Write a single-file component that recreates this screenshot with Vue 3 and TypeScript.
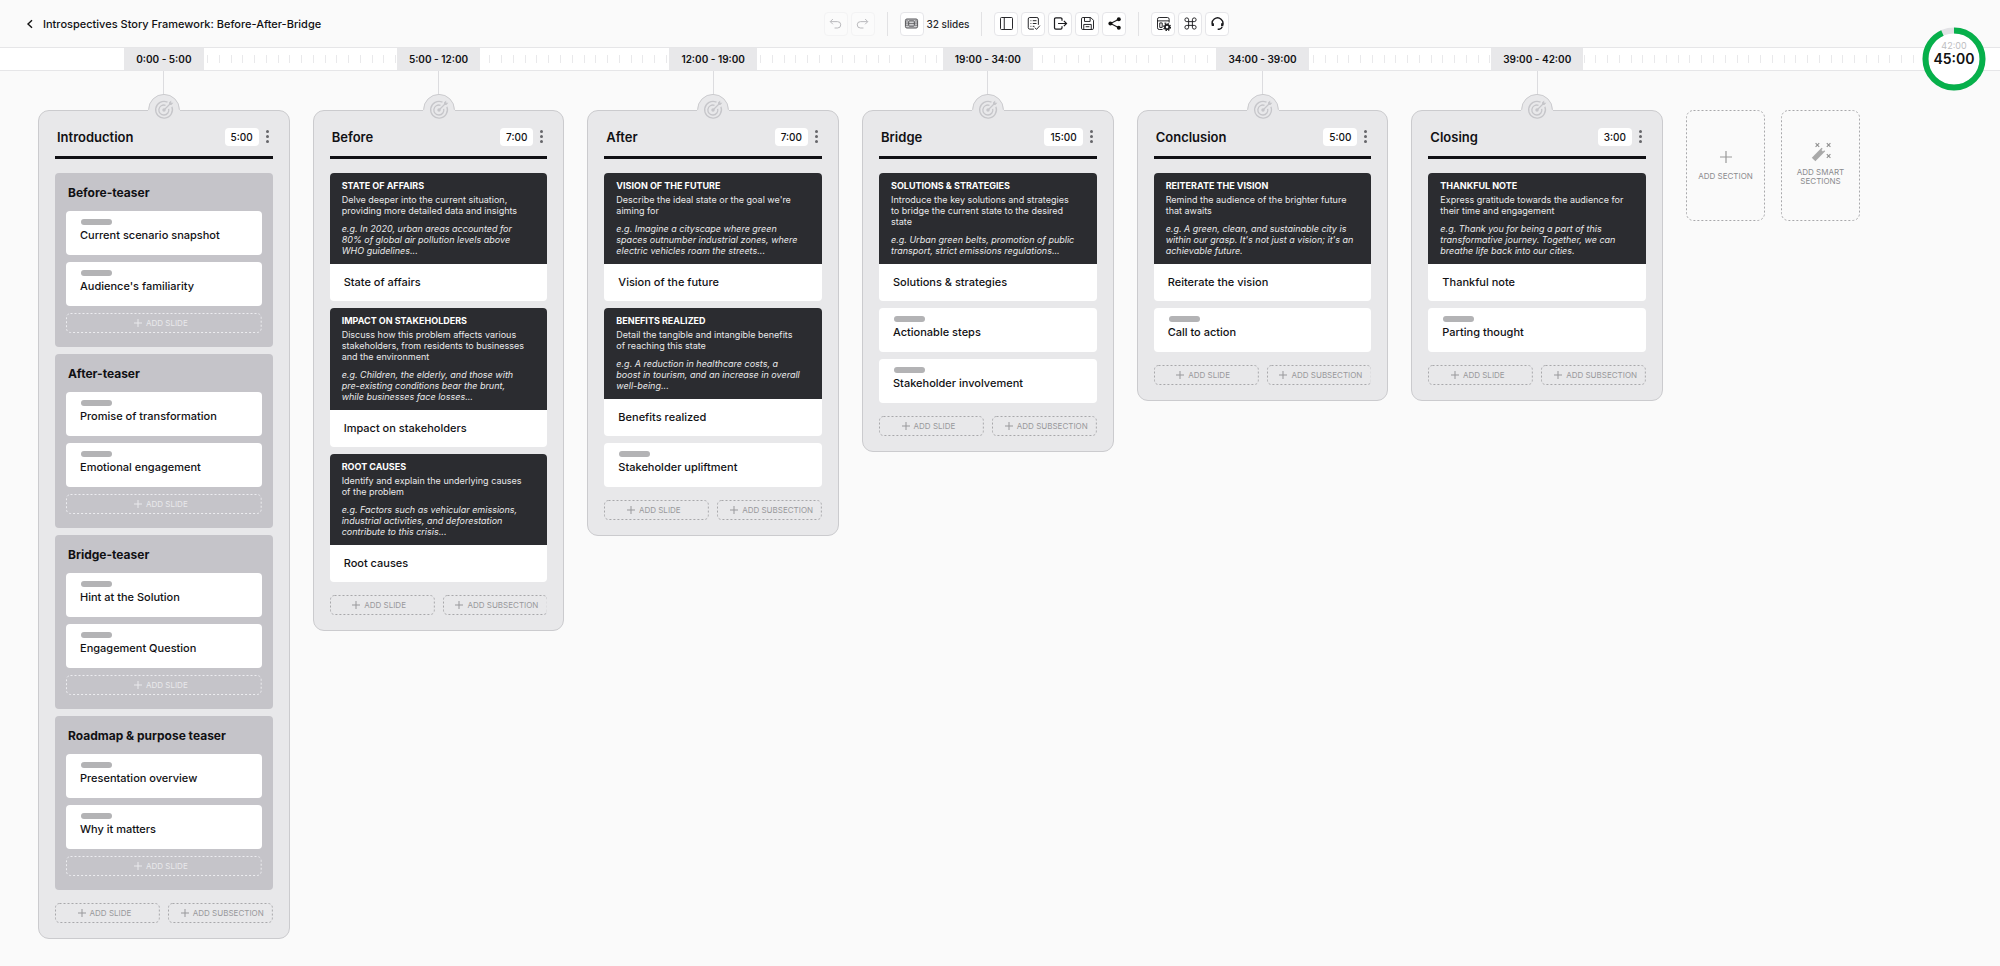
<script setup lang="ts">
interface Slide {
  title: string
  hint?: { head: string; text: string; example: string }
}
interface Subsection {
  title: string
  slides: Slide[]
}
interface Section {
  title: string
  range: string
  duration: string
  subsections?: Subsection[]
  slides?: Slide[]
}

const sections: Section[] = [
  {
    title: 'Introduction',
    range: '0:00 - 5:00',
    duration: '5:00',
    subsections: [
      { title: 'Before-teaser', slides: [{ title: 'Current scenario snapshot' }, { title: "Audience's familiarity" }] },
      { title: 'After-teaser', slides: [{ title: 'Promise of transformation' }, { title: 'Emotional engagement' }] },
      { title: 'Bridge-teaser', slides: [{ title: 'Hint at the Solution' }, { title: 'Engagement Question' }] },
      { title: 'Roadmap & purpose teaser', slides: [{ title: 'Presentation overview' }, { title: 'Why it matters' }] },
    ],
  },
  {
    title: 'Before',
    range: '5:00 - 12:00',
    duration: '7:00',
    slides: [
      {
        title: 'State of affairs',
        hint: {
          head: 'STATE OF AFFAIRS',
          text: 'Delve deeper into the current situation,\nproviding more detailed data and insights',
          example: 'e.g. In 2020, urban areas accounted for\n80% of global air pollution levels above\nWHO guidelines...',
        },
      },
      {
        title: 'Impact on stakeholders',
        hint: {
          head: 'IMPACT ON STAKEHOLDERS',
          text: 'Discuss how this problem affects various\nstakeholders, from residents to businesses\nand the environment',
          example: 'e.g. Children, the elderly, and those with\npre-existing conditions bear the brunt,\nwhile businesses face losses...',
        },
      },
      {
        title: 'Root causes',
        hint: {
          head: 'ROOT CAUSES',
          text: 'Identify and explain the underlying causes\nof the problem',
          example: 'e.g. Factors such as vehicular emissions,\nindustrial activities, and deforestation\ncontribute to this crisis...',
        },
      },
    ],
  },
  {
    title: 'After',
    range: '12:00 - 19:00',
    duration: '7:00',
    slides: [
      {
        title: 'Vision of the future',
        hint: {
          head: 'VISION OF THE FUTURE',
          text: "Describe the ideal state or the goal we're\naiming for",
          example: 'e.g. Imagine a cityscape where green\nspaces outnumber industrial zones, where\nelectric vehicles roam the streets...',
        },
      },
      {
        title: 'Benefits realized',
        hint: {
          head: 'BENEFITS REALIZED',
          text: 'Detail the tangible and intangible benefits\nof reaching this state',
          example: 'e.g. A reduction in healthcare costs, a\nboost in tourism, and an increase in overall\nwell-being...',
        },
      },
      { title: 'Stakeholder upliftment' },
    ],
  },
  {
    title: 'Bridge',
    range: '19:00 - 34:00',
    duration: '15:00',
    slides: [
      {
        title: 'Solutions & strategies',
        hint: {
          head: 'SOLUTIONS & STRATEGIES',
          text: 'Introduce the key solutions and strategies\nto bridge the current state to the desired\nstate',
          example: 'e.g. Urban green belts, promotion of public\ntransport, strict emissions regulations...',
        },
      },
      { title: 'Actionable steps' },
      { title: 'Stakeholder involvement' },
    ],
  },
  {
    title: 'Conclusion',
    range: '34:00 - 39:00',
    duration: '5:00',
    slides: [
      {
        title: 'Reiterate the vision',
        hint: {
          head: 'REITERATE THE VISION',
          text: 'Remind the audience of the brighter future\nthat awaits',
          example: "e.g. A green, clean, and sustainable city is\nwithin our grasp. It's not just a vision; it's an\nachievable future.",
        },
      },
      { title: 'Call to action' },
    ],
  },
  {
    title: 'Closing',
    range: '39:00 - 42:00',
    duration: '3:00',
    slides: [
      {
        title: 'Thankful note',
        hint: {
          head: 'THANKFUL NOTE',
          text: 'Express gratitude towards the audience for\ntheir time and engagement',
          example: 'e.g. Thank you for being a part of this\ntransformative journey. Together, we can\nbreathe life back into our cities.',
        },
      },
      { title: 'Parting thought' },
    ],
  },
]

const tickCount = 146
</script>

<template>
  <div class="page">
    <header class="topbar">
      <div class="heading">
        <a href="#" class="back" aria-label="Back">
          <svg width="8" height="10" viewBox="0 0 8 10"><path d="M6 1.2 2 5l4 3.8" fill="none" stroke="#111" stroke-width="1.4" /></svg>
        </a>
        <h1>Introspectives Story Framework: Before-After-Bridge</h1>
      </div>

      <nav class="toolbar" aria-label="Tools">
        <button class="tool faint" aria-label="Undo">
          <svg viewBox="0 0 16 16"><path d="M5.2 3.2 2.4 6l2.8 2.8M2.6 6h7.6a3.3 3.3 0 0 1 0 6.8H7" /></svg>
        </button>
        <button class="tool faint" aria-label="Redo">
          <svg viewBox="0 0 16 16"><path d="M10.8 3.2 13.6 6l-2.8 2.8M13.4 6H5.8a3.3 3.3 0 0 0 0 6.8H9" /></svg>
        </button>
        <span class="divider"></span>
        <button id="slides" class="tool" aria-label="Slides">
          <svg viewBox="0 0 16 16">
            <rect x="1.5" y="3.2" width="13" height="9.600" rx="1.6" fill="#d2d2d4" stroke="#4a4a4d" />
            <rect x="5" y="5.2" width="6" height="5.600" rx=".8" fill="#d2d2d4" stroke="#4a4a4d" />
            <path d="M3.2 4.5v7M12.8 4.5v7" stroke="#4a4a4d" stroke-dasharray="1.4 1" />
            <path d="M5 8h6" stroke="#4a4a4d" stroke-width=".7" />
          </svg>
        </button>
        <label class="count" for="slides">32 slides</label>
        <span class="divider"></span>
        <button class="tool" aria-label="Side panel">
          <svg viewBox="0 0 16 16"><rect x="1.6" y="1.6" width="12.8" height="12.8" rx="1" /><path d="M5.6 1.6v12.8" /></svg>
        </button>
        <button class="tool" aria-label="Outline">
          <svg viewBox="0 0 16 16">
            <path d="M13.2 9.4V3.2a1.6 1.6 0 0 0-1.6-1.6H4a1.6 1.6 0 0 0-1.6 1.6v9.2A1.6 1.6 0 0 0 4 14h4.4M4.8 5h.9M7.2 5h4M4.8 8h.9M7.2 8h4M4.8 11h.9M7.2 11h1.8M9.4 12.4l1.8 1.9 3.6-4" />
          </svg>
        </button>
        <button class="tool" aria-label="Export">
          <svg viewBox="0 0 16 16" class="bold"><path d="M9.6 5V3.4a1.4 1.4 0 0 0-1.4-1.4H3a1.4 1.4 0 0 0-1.4 1.4v9.2A1.4 1.4 0 0 0 3 14h5.2a1.4 1.4 0 0 0 1.4-1.4V11M5.4 8h9M11.6 5.2 14.4 8l-2.8 2.8" /></svg>
        </button>
        <button class="tool" aria-label="Save">
          <svg viewBox="0 0 16 16"><path d="M3 1.6h8.4l3 3V13a1.4 1.4 0 0 1-1.4 1.4H3A1.4 1.4 0 0 1 1.6 13V3A1.4 1.4 0 0 1 3 1.6ZM4.8 1.8v4h6v-4M4 14.2V9h8v5.2M6 11.4h4" /></svg>
        </button>
        <button class="tool" aria-label="Share">
          <svg viewBox="0 0 16 16"><path d="M12.6 3.4 3.8 8l8.8 4.6" stroke-width="1.2" /><g class="solid"><circle cx="12.6" cy="3.4" r="2.1" /><circle cx="3.6" cy="8" r="2.1" /><circle cx="12.6" cy="12.6" r="2.1" /></g></svg>
        </button>
        <span class="divider"></span>
        <button class="tool" aria-label="Template settings">
          <svg viewBox="0 0 16 16">
            <path d="M14 7V3.4A1.8 1.8 0 0 0 12.2 1.6H3.4A1.8 1.8 0 0 0 1.6 3.4v9.2a1.8 1.8 0 0 0 1.8 1.8H7M1.6 5.2H14M4 7.4h2.6v4.8H4zM9 7.6h2" />
            <circle cx="11.8" cy="11.8" r="2.3" stroke-width="1.8" /><circle cx="11.8" cy="11.8" r="3.6" stroke-width="1.4" stroke-dasharray="1.5 1.33" />
          </svg>
        </button>
        <button class="tool" aria-label="Shortcuts">
          <svg viewBox="0 0 16 16"><path d="M6 6H4a2 2 0 1 1 2-2v8a2 2 0 1 1-2-2h8a2 2 0 1 1-2 2V4a2 2 0 1 1 2 2H6" /></svg>
        </button>
        <button class="tool" aria-label="Support">
          <svg viewBox="0 0 16 16"><path d="M3.2 10.4A5.6 5.6 0 1 1 12.8 10.6M8.2 14.2h1.6a4 4 0 0 0 3.2-2.4" stroke-width="1.5" /><path d="M3 7.6v3M13 7.6v3.4" stroke-width="2.4" /></svg>
        </button>
      </nav>
    </header>

    <div class="timeline">
      <div class="ticks" aria-hidden="true"><i v-for="n in tickCount" :key="n"></i></div>
      <div class="ranges">
        <div v-for="s in sections" :key="s.range" class="slot"><span>{{ s.range }}</span></div>
      </div>
      <div class="clock">
        <svg viewBox="0 0 64 64" aria-hidden="true">
          <circle cx="32" cy="32" r="31.5" fill="#fff" />
          <circle cx="32" cy="32" r="28.5" fill="none" stroke="#e2e2e5" stroke-width="6" />
          <circle cx="32" cy="32" r="28.5" fill="none" stroke="#07b04b" stroke-width="6" pathLength="45" stroke-dasharray="42 3" transform="rotate(-90 32 32)" />
        </svg>
        <div class="clock-text"><span>42:00</span><strong>45:00</strong></div>
      </div>
    </div>

    <main class="board">
      <section v-for="s in sections" :key="s.title" class="column">
        <div class="connector"></div>
        <div class="card">
          <div class="bump" aria-hidden="true">
            <svg width="32" height="32" viewBox="0 0 32 32">
              <path d="M0 16.2C1.2 7 7 .6 16 .6S30.800 7 32 16.200V18H0Z" fill="#e8e8ea" />
              <path d="M.6 15.800A15.400 15.400 0 0 1 31.400 15.800" fill="none" stroke="#cbcbce" />
              <g fill="none" stroke="#c6c6ca" stroke-width="1.300">
                <path d="M19.500 8.100a8.400 8.400 0 1 0 4.400 4.700" />
                <path d="M17.500 11.300a5 5 0 1 0 3.200 3.500" />
                <path d="m16 16 6-6" />
                <path d="M21 11V8.600L23.200 6.600v2.200h2.200L23.400 11z" fill="#c6c6ca" stroke="none" />
              </g>
              <circle cx="16" cy="16" r="1.700" fill="#c6c6ca" />
            </svg>
          </div>
          <div class="card-head">
            <h2>{{ s.title }}</h2>
            <span class="duration">{{ s.duration }}</span>
            <button class="more" :aria-label="s.title + ' menu'"><i></i><i></i><i></i></button>
          </div>

          <div class="stack">
            <section v-for="sub in s.subsections" :key="sub.title" class="subsection">
              <h3>{{ sub.title }}</h3>
              <div class="stack">
                <article v-for="slide in sub.slides" :key="slide.title" class="slide">
                  <span class="pill"></span>
                  <p>{{ slide.title }}</p>
                </article>
                <button class="add light">
                  <svg class="dash"><rect x=".5" y=".5" rx="4" /></svg>
                  <svg class="plus" viewBox="0 0 8 8"><path d="M4 0v8M0 4h8" /></svg>ADD SLIDE
                </button>
              </div>
            </section>
            <article v-for="slide in s.slides" :key="slide.title" class="slide" :class="{ hinted: slide.hint }">
              <div v-if="slide.hint" class="hint">
                <h4>{{ slide.hint.head }}</h4>
                <p>{{ slide.hint.text }}</p>
                <em>{{ slide.hint.example }}</em>
              </div>
              <span v-else class="pill"></span>
              <p>{{ slide.title }}</p>
            </article>
          </div>

          <div class="actions">
            <button class="add">
              <svg class="dash"><rect x=".5" y=".5" rx="4" /></svg>
              <svg class="plus" viewBox="0 0 8 8"><path d="M4 0v8M0 4h8" /></svg>ADD SLIDE
            </button>
            <button class="add wide">
              <svg class="dash"><rect x=".5" y=".5" rx="4" /></svg>
              <svg class="plus" viewBox="0 0 8 8"><path d="M4 0v8M0 4h8" /></svg>ADD SUBSECTION
            </button>
          </div>
        </div>
      </section>

      <div class="extras">
        <button class="new">
          <svg class="dash"><rect x=".5" y=".5" rx="7" /></svg>
          <svg width="12" height="12" viewBox="0 0 12 12"><path d="M6 0v12M0 6h12" stroke="#999" stroke-width="1.2" /></svg>
          <span>ADD SECTION</span>
        </button>
        <button class="new smart">
          <svg class="dash"><rect x=".5" y=".5" rx="7" /></svg>
          <svg width="20" height="20" viewBox="0 0 20 20">
            <path d="M2.600 17.400 12.400 7.600" stroke="#a9a9a9" stroke-width="5" />
            <path d="m11.200 8.800 1.800-1.800" stroke="#fafafa" stroke-width="2" />
            <path d="m4.600 1.200 3.600 3.600m0-3.600L4.600 4.800M15.800 1.200l3.600 3.600m0-3.600-3.600 3.600M15.800 12.200l3.600 3.600m0-3.600-3.600 3.600" stroke="#8f8f8f" stroke-width="1.100" />
          </svg>
          <span>ADD SMART SECTIONS</span>
        </button>
      </div>
    </main>
  </div>
</template>

<style>
body {
  margin: 0;
  background: #fafafa;
}
</style>

<style scoped>
.page {
  min-height: 100vh;
  background: #fafafa;
  color: #111114;
  font-family: Inter, "Liberation Sans", sans-serif;
}
h1, h2, h3, h4, p {
  margin: 0;
}
button {
  padding: 0;
  border: 0;
  background: none;
  font: inherit;
  color: inherit;
  cursor: pointer;
}

/* top bar */
.topbar {
  display: grid;
  grid-template-columns: 1fr auto 1fr;
  align-items: center;
  height: 47px;
  padding: 0 26px;
}
.heading {
  display: flex;
  align-items: center;
  gap: 9px;
}
.back {
  display: flex;
}
h1 {
  font-size: 11px;
  font-weight: 500;
  white-space: nowrap;
}
.toolbar {
  display: flex;
  align-items: center;
  gap: 3px;
  margin-left: 53px;
}
.tool {
  display: flex;
  align-items: center;
  justify-content: center;
  box-sizing: border-box;
  width: 24px;
  height: 24px;
  border: 1px solid #e6e6e9;
  border-radius: 4px;
  background: #fff;
}
.tool svg {
  width: 15px;
  height: 15px;
  fill: none;
  stroke: #1b1b1e;
  stroke-width: 1;
}
.tool svg.bold {
  stroke-width: 1.3;
}
.tool .solid {
  fill: #111;
  stroke: none;
}
.faint {
  border-color: #f3f3f4;
  background: #fbfbfb;
}
.faint svg {
  stroke: #b4b4b8;
}
.divider {
  width: 1px;
  height: 24px;
  margin: 0 9px;
  background: #e2e2e4;
}
.count {
  font-size: 10px;
  font-weight: 500;
  color: #28282b;
}

/* timeline */
.timeline {
  display: grid;
  position: relative;
  box-sizing: border-box;
  height: 24px;
  border-top: 1px solid #e6e6e8;
  border-bottom: 1px solid #e6e6e8;
  background: #fff;
}
.ticks, .ranges {
  grid-area: 1 / 1;
}
.ticks {
  display: flex;
  align-items: center;
  justify-content: space-between;
  padding: 0 85px 0 207px;
}
.ticks i {
  width: 1px;
  height: 8px;
  background: #e9e9eb;
}
.ranges {
  position: relative;
  display: flex;
  gap: 23px;
  padding: 0 337px 0 38px;
}
.slot {
  display: flex;
  flex: 1 1 0;
  justify-content: center;
}
.slot span {
  display: flex;
  align-items: center;
  padding: 0 12px;
  background: #e8e8ea;
  font-size: 10px;
  font-weight: 600;
  white-space: nowrap;
}
.clock {
  position: absolute;
  top: -21px;
  right: 14px;
  width: 64px;
  height: 64px;
}
.clock svg {
  width: 64px;
  height: 64px;
}
.clock-text {
  position: absolute;
  inset: 13px 0 0;
  display: flex;
  flex-direction: column;
  align-items: center;
  line-height: 11px;
  font-size: 9px;
  color: #bdbdc1;
}
.clock-text strong {
  font-size: 14px;
  line-height: 15px;
  font-weight: 600;
  color: #111;
}

/* board */
.board {
  display: flex;
  align-items: flex-start;
  gap: 23px;
  padding: 0 140px 24px 38px;
}
.column {
  flex: 1 1 0;
  min-width: 0;
}
.connector {
  width: 1px;
  height: 39px;
  margin: 0 auto;
  background: #dcdcdf;
}
.card {
  position: relative;
  box-sizing: border-box;
  padding: 0 16px 15px;
  border: 1px solid #cbcbce;
  border-radius: 11px;
  background: #e8e8ea;
}
.bump {
  position: absolute;
  top: -17px;
  left: 0;
  right: 0;
  display: flex;
  justify-content: center;
}
.card-head {
  display: flex;
  align-items: center;
  box-sizing: border-box;
  height: 48px;
  margin-bottom: 14px;
  padding: 6px 0 0 2px;
  border-bottom: 3px solid #101014;
}
h2 {
  flex: 1;
  font-size: 13px;
  font-weight: 600;
}
.duration {
  padding: 0 6px;
  border-radius: 4px;
  background: #fff;
  font-size: 10px;
  line-height: 18px;
  font-weight: 500;
}
.more {
  display: flex;
  flex-direction: column;
  align-items: center;
  gap: 2px;
  width: 11px;
  margin-left: 3px;
}
.more i {
  width: 3px;
  height: 3px;
  border-radius: 50%;
  background: #66666a;
}
.stack {
  display: flex;
  flex-direction: column;
  gap: 7px;
}
.subsection {
  padding: 11px 11px 14px;
  border-radius: 4px;
  background: #c5c4c9;
}
h3 {
  margin-bottom: 10px;
  padding-left: 2px;
  font-size: 12px;
  line-height: 17px;
  font-weight: 700;
}
.slide {
  box-sizing: border-box;
  min-height: 44px;
  padding: 8px 14px 0;
  border-radius: 4px;
  background: #fff;
  overflow: hidden;
}
.slide > p {
  font-size: 11px;
  line-height: 14px;
  font-weight: 500;
}
.pill {
  display: block;
  width: 31px;
  height: 6px;
  margin: 0 0 3px 1px;
  border-radius: 3px;
  background: #b3b3b5;
}
.hinted {
  padding: 0;
}
.hinted > p {
  padding: 11px 14px 12px;
}
.hint {
  padding: 7px 12px 8px;
  background: #2b2c30;
  color: #e9e9ea;
  font-size: 9px;
  line-height: 11px;
  white-space: pre-line;
}
.hint h4 {
  margin-bottom: 2px;
  font-size: 9px;
  line-height: 12px;
  font-weight: 700;
  color: #fff;
}
.hint em {
  display: block;
  margin-top: 7px;
  font-style: italic;
}

/* dashed buttons */
.dash {
  position: absolute;
  inset: 0;
  width: 100%;
  height: 100%;
  fill: none;
  stroke: #a8a8ab;
  stroke-dasharray: 2 2;
}
.dash rect {
  width: calc(100% - 1px);
  height: calc(100% - 1px);
}
.actions {
  display: grid;
  grid-template-columns: 1fr 1fr;
  gap: 8px;
  margin-top: 13px;
}
.add {
  position: relative;
  display: flex;
  align-items: center;
  justify-content: center;
  gap: 4px;
  height: 20px;
  padding-right: 6px;
  font-size: 8px;
  color: #98989b;
  white-space: nowrap;
}
.add.wide {
  padding: 0 0 0 4px;
}
.plus {
  width: 8px;
  height: 8px;
  stroke: currentColor;
  stroke-width: 1;
}
.light {
  color: #e9e9ec;
}
.light .dash {
  stroke: #ededf0;
}
.extras {
  display: flex;
  gap: 16px;
  margin-top: 39px;
}
.new {
  position: relative;
  display: flex;
  flex-direction: column;
  align-items: center;
  justify-content: center;
  gap: 9px;
  width: 79px;
  height: 111px;
  font-size: 8px;
  line-height: 9px;
  color: #8b8b8e;
}
.smart {
  gap: 6px;
  padding-bottom: 4px;
}
.new span {
  max-width: 60px;
}
</style>
